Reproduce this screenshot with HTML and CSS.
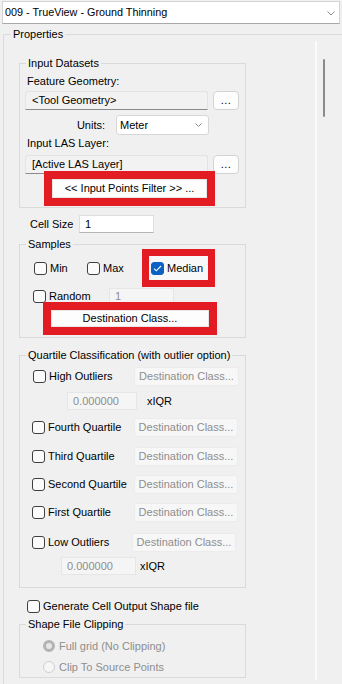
FILE: index.html
```html
<!DOCTYPE html>
<html>
<head>
<meta charset="utf-8">
<link rel="stylesheet" href="styles.css">
</head>
<body>
<div class="topcombo">
  <span>009 - TrueView - Ground Thinning</span>
  <svg class="chev" width="8" height="5" viewBox="0 0 8 5"><path d="M0.5 0.5 L4 4 L7.5 0.5" fill="none" stroke="#8a8a8a" stroke-width="1"/></svg>
</div>
<fieldset class="props">
  <legend>Properties</legend>
  <div class="props-body">
    <div class="viewport">
      <fieldset class="grp grp-input">
        <legend>Input Datasets</legend>
        <div class="lbl lbl-fg">Feature Geometry:</div>
        <div class="pathrow pathrow-fg">
          <div class="rotext">&lt;Tool Geometry&gt;</div>
          <div class="dots">...</div>
        </div>
        <div class="unitsrow">
          <span class="units-lbl">Units:</span>
          <div class="combo"><span>Meter</span><svg width="7" height="4" viewBox="0 0 7 4"><path d="M0.5 0.5 L3.5 3.5 L6.5 0.5" fill="none" stroke="#8a8a8a" stroke-width="1"/></svg></div>
        </div>
        <div class="lbl lbl-las">Input LAS Layer:</div>
        <div class="pathrow pathrow-las">
          <div class="rotext">[Active LAS Layer]</div>
          <div class="dots">...</div>
        </div>
        <div class="btn filter hl">&lt;&lt; Input Points Filter &gt;&gt; ...</div>
      </fieldset>

      <div class="cellrow">
        <span class="cell-lbl">Cell Size</span>
        <div class="tb tb-cell">1</div>
      </div>

      <fieldset class="grp grp-samples">
        <legend>Samples</legend>
        <div class="srow1">
          <div class="chk w-min"><span class="box"></span><span>Min</span></div>
          <div class="chk w-max"><span class="box"></span><span>Max</span></div>
          <div class="hl-median">
            <div class="chk"><span class="box on"><svg width="9" height="7" viewBox="0 0 9 7"><path d="M1 3.6 L3.3 5.8 L8 1" fill="none" stroke="#fff" stroke-width="1.1"/></svg></span><span>Median</span></div>
          </div>
        </div>
        <div class="srow2">
          <div class="chk w-random"><span class="box"></span><span>Random</span></div>
          <div class="tb tb-dis tb-random">1</div>
        </div>
        <div class="btn dest hl">Destination Class...</div>
      </fieldset>

      <fieldset class="grp grp-quart">
        <legend>Quartile Classification (with outlier option)</legend>
        <div class="qrow q-high">
          <div class="chk w-q"><span class="box"></span><span>High Outliers</span></div>
          <div class="dbtn">Destination Class...</div>
        </div>
        <div class="xrow x-high">
          <div class="tb tb-dis tb-x">0.000000</div>
          <span>xIQR</span>
        </div>
        <div class="qrow q-fourth">
          <div class="chk w-q"><span class="box"></span><span>Fourth Quartile</span></div>
          <div class="dbtn">Destination Class...</div>
        </div>
        <div class="qrow q-third">
          <div class="chk w-q"><span class="box"></span><span>Third Quartile</span></div>
          <div class="dbtn">Destination Class...</div>
        </div>
        <div class="qrow q-second">
          <div class="chk w-q"><span class="box"></span><span>Second Quartile</span></div>
          <div class="dbtn">Destination Class...</div>
        </div>
        <div class="qrow q-first">
          <div class="chk w-q"><span class="box"></span><span>First Quartile</span></div>
          <div class="dbtn">Destination Class...</div>
        </div>
        <div class="qrow q-low">
          <div class="chk w-q w-qlow"><span class="box"></span><span>Low Outliers</span></div>
          <div class="dbtn">Destination Class...</div>
        </div>
        <div class="xrow x-low">
          <div class="tb tb-dis tb-x tb-xlow">0.000000</div>
          <span>xIQR</span>
        </div>
      </fieldset>

      <div class="chk genrow"><span class="box"></span><span>Generate Cell Output Shape file</span></div>

      <fieldset class="grp grp-shape">
        <legend>Shape File Clipping</legend>
        <div class="radio r1"><span class="rad on"></span><span>Full grid (No Clipping)</span></div>
        <div class="radio r2"><span class="rad"></span><span>Clip To Source Points</span></div>
      </fieldset>
    </div>
    <div class="sbar"><div class="thumb"></div></div>
  </div>
</fieldset>
</body>
</html>
```

FILE: styles.css
```css
html, body {
  margin: 0;
  padding: 0;
  overflow: hidden;
}
body {
  width: 342px;
  height: 684px;
  background: #f0f0f0;
  font-family: "Liberation Sans", Arial, sans-serif;
  font-size: 11px;
  line-height: 13px;
  color: #000;
}

/* top combo */
.topcombo {
  box-sizing: border-box;
  height: 23px;
  margin: 1px 2px 0 2px;
  padding: 0 4px 0 2px;
  background: #fff;
  border: 1px solid #d4d4d4;
  border-bottom-color: #a9a9a9;
  display: flex;
  align-items: center;
  justify-content: space-between;
  font-size: 10.8px;
}
.chev { display: block; margin-top: 1px; }

/* properties group */
.props {
  margin: 4px 0 0 3px;
  padding: 0 0 8px 0;
  width: 345px;
  min-width: 0;
  box-sizing: border-box;
  border: 1px solid #dadada;
}
fieldset > legend {
  padding: 0 2px;
  line-height: 13px;
}
.props > legend { margin-left: 7px; }
.props-body {
  display: flex;
  height: 639px;
}
.viewport {
  width: 311px;
  flex: none;
  border-right: 2px solid #fbfbfb;
}
.sbar { flex: 1; }
.thumb {
  width: 2px;
  height: 58px;
  margin: 18px 0 0 6px;
  background: #8b8b8b;
  border-radius: 1px;
}

/* inner groups */
.grp {
  margin: 0 0 0 15px;
  padding: 0;
  width: 227px;
  min-width: 0;
  box-sizing: border-box;
  border: 1px solid #dadada;
}
.grp > legend { margin-left: 6px; }
.grp-input { margin-top: 16px; padding-bottom: 9px; }
.grp-samples { margin-top: 5px; padding-bottom: 10px; }
.grp-quart { margin-top: 11px; padding-bottom: 12px; }
.grp-shape { margin-top: 5px; padding-bottom: 4px; }

.lbl { padding-left: 7px; }
.lbl-fg { margin-top: 5px; }
.lbl-las { margin-top: 2px; }

.pathrow {
  display: flex;
  align-items: stretch;
  gap: 5px;
  height: 19px;
  margin-left: 5px;
}
.pathrow-fg { margin-top: 3px; }
.pathrow-las { margin-top: 5px; }
.rotext {
  box-sizing: border-box;
  width: 183px;
  padding-left: 6px;
  background: #f2f2f2;
  border: 1px solid #e3e3e3;
  border-bottom-color: #8a8a8a;
  border-radius: 3px 3px 0 0;
  display: flex;
  align-items: center;
}
.dots {
  box-sizing: border-box;
  width: 26px;
  background: #fdfdfd;
  border: 1px solid #d3d3d3;
  border-radius: 4px;
  text-align: center;
  line-height: 17px;
  letter-spacing: 0.5px;
}

.unitsrow {
  display: flex;
  align-items: center;
  margin-top: 5px;
  height: 20px;
}
.units-lbl {
  width: 85px;
  text-align: right;
  margin-right: 11px;
}
.combo {
  box-sizing: border-box;
  width: 93px;
  height: 20px;
  padding: 0 6px 0 3px;
  background: #fff;
  border: 1px solid #d6d6d6;
  border-radius: 3px;
  display: flex;
  align-items: center;
  justify-content: space-between;
}
.combo svg { display: block; }

.btn {
  box-sizing: border-box;
  background: #fdfdfd;
  border: 1px solid #e6e6e6;
  text-align: center;
  display: flex;
  align-items: center;
  justify-content: center;
}
.hl { outline: 8px solid #e31b23; }
.filter {
  width: 155px;
  height: 19px;
  margin: 5px 0 0 32px;
}
.dest {
  width: 158px;
  height: 17px;
  margin: 5px 0 0 31px;
}

/* cell size */
.cellrow {
  display: flex;
  align-items: center;
  height: 18px;
  margin: 7px 0 0 26px;
}
.cell-lbl { width: 49px; }
.tb {
  box-sizing: border-box;
  height: 18px;
  padding-left: 5px;
  background: #fff;
  border: 1px solid #dedede;
  border-bottom-color: #b5b5b5;
  display: flex;
  align-items: center;
}
.tb-cell { width: 75px; }
.tb-dis {
  background: #f5f5f5;
  border-color: #e6e6e6;
  color: #8e8e8e;
}

/* checkboxes */
.chk {
  display: flex;
  align-items: center;
}
.box {
  box-sizing: border-box;
  width: 13px;
  height: 13px;
  margin-right: 3px;
  border: 1px solid #3f3f3f;
  border-radius: 3px;
  background: #fbfbfb;
  flex: none;
}
.box.on {
  background: #0b61c4;
  border-color: #0b61c4;
  display: flex;
  align-items: center;
  justify-content: center;
}
.box.on svg { display: block; }

.srow1 {
  display: flex;
  align-items: center;
  height: 13px;
  margin: 11px 0 0 14px;
}
.w-min { width: 53px; }
.w-max { width: 64px; }
.hl-median {
  padding: 6px 5px 5px 2px;
  margin: -6px -5px -5px -2px;
  background: #f8f8f8;
  outline: 7px solid #e31b23;
}
.srow2 {
  display: flex;
  align-items: center;
  height: 17px;
  margin: 13px 0 0 13px;
}
.w-random { width: 76px; }
.tb-random { width: 65px; height: 17px; }

/* quartile rows */
.qrow {
  display: flex;
  align-items: center;
  height: 19px;
  margin-left: 12px;
}
.w-q { width: 102px; }
.w-qlow { width: 100px; }
.dbtn {
  box-sizing: border-box;
  width: 104px;
  height: 19px;
  background: #f7f7f7;
  border: 1px solid #ececec;
  border-radius: 3px;
  color: #8e8e8e;
  display: flex;
  align-items: center;
  justify-content: center;
}
.q-high { margin-top: 5px; margin-left: 13px; }
.q-high .w-q { width: 101px; }
.q-high .dbtn { width: 105px; }
.q-fourth { margin-top: 8px; }
.q-third { margin-top: 10px; }
.q-second { margin-top: 9px; }
.q-first { margin-top: 9px; }
.q-low { margin-top: 11px; }

.xrow {
  display: flex;
  align-items: center;
  height: 18px;
}
.tb-x { width: 70px; }
.x-high { margin: 6px 0 0 47px; }
.x-high .tb-x { margin-right: 10px; }
.x-low { margin: 5px 0 0 41px; }
.tb-xlow { width: 75px; margin-right: 4px; }

/* generate + shape */
.genrow {
  height: 13px;
  margin: 12px 0 0 23px;
}
.radio {
  display: flex;
  align-items: center;
  height: 12px;
  margin: 9px 0 0 23px;
  color: #8e8e8e;
}
.rad {
  box-sizing: border-box;
  width: 12px;
  height: 12px;
  margin-right: 4px;
  border-radius: 50%;
  border: 1px solid #cfcfcf;
  background: #f6f6f6;
  flex: none;
}
.rad.on {
  border: 3px solid #b3b3b3;
  background: #e6e6e6;
}
```
